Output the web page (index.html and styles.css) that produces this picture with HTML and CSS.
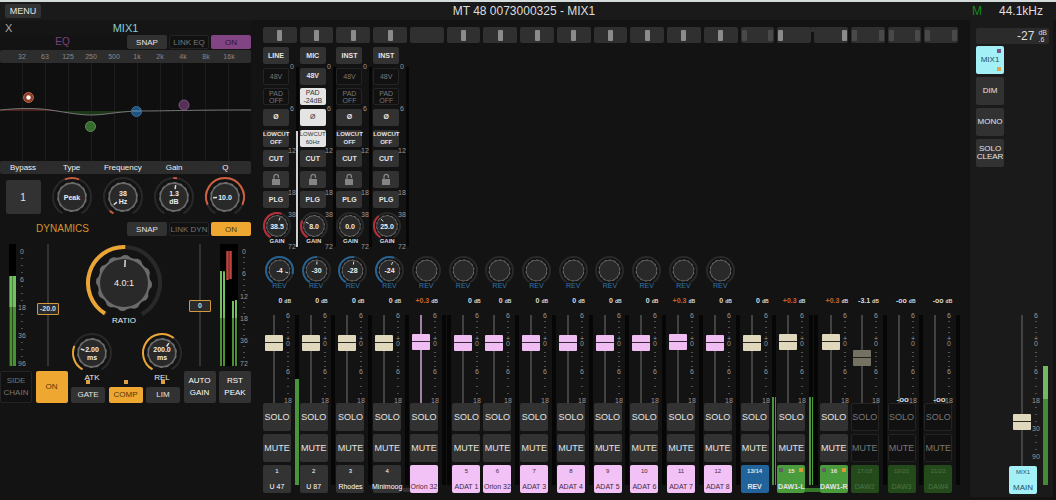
FILE: index.html
```html
<!DOCTYPE html>
<html lang="en">
<head>
  <meta charset="UTF-8">
  <title>MT 48 - MIX1</title>
  <link rel="stylesheet" href="styles.css">
</head>
<body>
  <header class="topbar">
    <button class="menu">MENU</button>
    <h1>MT 48 0073000325 - MIX1</h1>
    <div class="clock"><span class="master">M</span><span>44.1kHz</span></div>
  </header>

  <main class="mixer">
    <section class="side">
      <div class="side-title">
        <button class="close">X</button>
        <h2>MIX1</h2>
      </div>

      <div class="module-head eq-head">
        <h3>EQ</h3>
        <button>SNAP</button>
        <button class="off">LINK EQ</button>
        <button class="on">ON</button>
      </div>
      <div class="freqs">
        <span>32</span><span>63</span><span>125</span><span>250</span><span>500</span><span>1k</span><span>2k</span><span>4k</span><span>8k</span><span>16k</span>
      </div>
      <svg class="graph" viewBox="0 0 251 98">
        <path class="grid" d="M22.5 0V98M45.5 0V98M68.5 0V98M91.5 0V98M114.5 0V98M137.5 0V98M160.5 0V98M182.5 0V98M205.5 0V98M228.5 0V98"/>
        <path d="M0 47C15 45 40 44 60 48L0 48Z" fill="#4a211b"/>
        <path d="M60 48C78 53 100 53 114 50Q125 48 137 48Z" fill="#1d3618"/>
        <path d="M0 47C20 45 36 45 50 47C70 50 80 52 91 52C105 52 114 49 137 48C170 48 185 47 251 47" fill="none" stroke="#777" stroke-width="1"/>
        <circle cx="28.500" cy="34.500" r="5" fill="#8d3b26" stroke="#b5694f"/>
        <circle cx="28.500" cy="34.500" r="2.200" fill="#fff"/>
        <circle cx="90.500" cy="63.500" r="5" fill="#376a2e" stroke="#5e9154"/>
        <circle cx="136.500" cy="48.500" r="5" fill="#1e527f" stroke="#3c6f9c"/>
        <path d="M132 48H141" stroke="#6f94b3"/>
        <circle cx="184" cy="42" r="5" fill="#573058" stroke="#79527a"/>
      </svg>
      <div class="params head">
        <span>Bypass</span><span>Type</span><span>Frequency</span><span>Gain</span><span>Q</span>
      </div>
      <div class="params">
        <button class="band">1</button>
        <label class="knob" data-name="Type" data-size="42" data-color="#c8593a" data-from="-22" data-to="22" data-text="Peak"></label>
        <label class="knob" data-name="Frequency" data-size="42" data-color="#c8593a" data-from="-150" data-to="-136" data-pointer="-130" data-text="38|Hz"></label>
        <label class="knob" data-name="Gain" data-size="42" data-color="#c8593a" data-from="-2" data-to="9" data-pointer="8" data-text="1.3|dB"></label>
        <label class="knob" data-name="Q" data-size="42" data-color="#d0603f" data-from="-114" data-to="114" data-pointer="-94" data-text="10.0"></label>
      </div>

      <div class="module-head dyn-head">
        <h3>DYNAMICS</h3>
        <button>SNAP</button>
        <button class="off">LINK DYN</button>
        <button class="on">ON</button>
      </div>
      <div class="dynamics">
        <svg class="dyn-meter" width="37" height="124">
          <rect x="9" width="7" height="122" fill="#000"/>
          <path d="M11 32V122M14.500 32V122" stroke="#4a9136" stroke-width="3"/>
          <path d="M11 32V63M14.500 32V63" stroke="#73c060" stroke-width="3"/>
          <g class="scale" data-x="22" data-marks="0:7 6:35 18:63 36:91 96:119"></g>
        </svg>
        <label class="threshold" style="--p:.54">
          <input type="range" value="46" aria-label="Threshold"><output>-20.0</output>
        </label>
        <div class="dyn-knobs">
          <label class="knob" data-name="Ratio" data-size="78" data-color="#eba535" data-from="-148" data-to="2" data-pointer="3" data-text="4.0:1"></label>
          <span class="caption">RATIO</span>
          <div class="times">
            <div>
              <label class="knob" data-name="Attack" data-size="42" data-color="#eba535" data-from="-150" data-to="-68" data-pointer="-70" data-text="2.00|ms"></label>
              <span class="caption">ATK</span>
            </div>
            <div>
              <label class="knob" data-name="Release" data-size="42" data-color="#eba535" data-from="-150" data-to="38" data-pointer="35" data-text="200.0|ms"></label>
              <span class="caption">REL</span>
            </div>
          </div>
        </div>
        <label class="threshold" style="--p:.51">
          <input type="range" value="49" aria-label="Gain"><output>0</output>
        </label>
        <svg class="dyn-meter" width="40" height="124">
          <rect x="9" width="18" height="122" fill="#000"/>
          <path d="M10 27V122M13 27V122M22 57V122M25 56V122" stroke="#4a9136" stroke-width="2"/>
          <path d="M10 27V74M13 28V74M22 57V74M25 56V74" stroke="#73c060" stroke-width="2"/>
          <path d="M16.500 7V36M19.500 7V35" stroke="#c54440" stroke-width="2.500"/>
          <g class="scale" data-x="33" data-marks="0:7 6:29 12:52 18:74 36:96 72:119"></g>
        </svg>
      </div>
      <div class="dyn-buttons">
        <button class="off">SIDE<br>CHAIN</button>
        <button class="on">ON</button>
        <div class="stage"><i></i><button>GATE</button></div>
        <div class="stage"><i></i><button class="on">COMP</button></div>
        <div class="stage"><i></i><button>LIM</button></div>
        <button class="strong">AUTO<br>GAIN</button>
        <button class="strong">RST<br>PEAK</button>
      </div>
    </section>

    <section class="channels" id="channels"></section>

    <aside class="monitor">
      <div class="level"><span>-27</span><small>dB<br>.6</small></div>
      <div class="monitor-buttons">
        <button class="mix">MIX1</button>
        <button>DIM</button>
        <button>MONO</button>
        <button>SOLO<br>CLEAR</button>
      </div>
      <div class="main-out">
        <div class="main-strip">
          <div class="fader-row">
            <input class="fader" type="range" value="27" aria-label="Main level">
            <svg class="marks" width="8" height="151"><g class="scale" data-x="4" data-marks="6:0 +:23 0:28 -:36 6:56 18:85 30:113 90:141"></g></svg>
          </div>
          <button class="name cyan"><small>MIX1</small><span>MAIN</span></button>
        </div>
        <div class="main-meter"></div>
      </div>
    </aside>
  </main>

  <script src="script.js"></script>
</body>
</html>
```

FILE: styles.css
```css
* {
  box-sizing: border-box;
}
body {
  margin: 0;
  min-height: 100vh;
  display: flex;
  flex-direction: column;
  background: #131313;
  color: #ddd;
  font-family: "Liberation Sans", Arial, sans-serif;
  font-size: 10px;
}
h1, h2, h3 {
  margin: 0;
  font-weight: normal;
}
button {
  padding: 0;
  border: 0;
  border-radius: 2px;
  background: #323232;
  color: #e4e4e4;
  font: inherit;
  cursor: pointer;
}
button.off {
  background: #111;
  border: 1px solid #242424;
  color: #777;
}

/* top bar */
.topbar {
  display: grid;
  grid-template-columns: 1fr auto 1fr;
  align-items: center;
  height: 20px;
  padding: 0 13px 0 5px;
  border-top: 2px solid #d3dcda;
  background: #1a1a1a;
}
.menu {
  justify-self: start;
  width: 36px;
  height: 14px;
  font-size: 9px;
}
.topbar h1 {
  font-size: 12px;
}
.clock {
  display: flex;
  justify-content: flex-end;
  gap: 17px;
  font-size: 12px;
}
.master {
  color: #148a1c;
}

.mixer {
  flex: 1;
  display: grid;
  grid-template-columns: 251px 1fr 83px;
  padding-right: 3px;
}

/* left panel */
.side-title {
  display: grid;
  grid-template-columns: 1fr auto 1fr;
  align-items: center;
  height: 15px;
  padding: 0 5px;
  background: #151515;
}
.side-title h2 {
  color: #88cbd6;
  font-size: 11px;
}
.close {
  justify-self: start;
  background: none;
  color: #aaa;
  font-size: 11px;
}
.module-head {
  display: grid;
  grid-template-columns: 1fr 40px 40px 40px;
  gap: 2px;
  height: 13px;
}
.module-head h3 {
  text-align: center;
  font-size: 10px;
  line-height: 14px;
}
.module-head button {
  font-size: 8px;
}
.eq-head h3 {
  color: #7b427b;
}
.eq-head .on {
  background: #834484;
  color: #32132f;
}
.dyn-head {
  margin-top: 4px;
}
.dyn-head h3 {
  color: #d39432;
}
.on {
  background: #eea832;
  color: #523707;
}
.freqs {
  display: flex;
  justify-content: center;
  height: 13px;
  margin-top: 2px;
  border-radius: 2px;
  background: #2d2d2d;
  color: #888;
  font-size: 7px;
  line-height: 13px;
}
.freqs span {
  width: 23px;
  text-align: center;
}
.graph {
  display: block;
  width: 100%;
  background: #0f0f0f;
}
.grid {
  stroke: #1d1d1d;
}
.params {
  display: grid;
  grid-template-columns: 46px repeat(4, 1fr);
  align-items: center;
  justify-items: center;
  height: 44px;
  padding-top: 2px;
}
.params.head {
  height: 13px;
  padding: 0;
  border-radius: 2px;
  background: #2c2c2c;
  color: #f0f0f0;
  font-size: 8px;
}
.band {
  width: 35px;
  height: 34px;
}

.knob {
  position: relative;
  display: block;
}
.knob svg {
  display: block;
  overflow: visible;
}
.knob input {
  position: absolute;
  inset: 0;
  width: 100%;
  height: 100%;
  margin: 0;
  opacity: 0;
}
.knob text {
  fill: #eee;
  font-size: 7px;
  font-weight: bold;
  text-anchor: middle;
}
.knob.large text {
  font-size: 9px;
  font-weight: normal;
}
.scale text {
  fill: #999;
  font-size: 7px;
  text-anchor: middle;
}
.scale path {
  stroke: #505050;
}

.dynamics {
  display: grid;
  grid-template-columns: 37px 22px 1fr 22px 40px;
  height: 136px;
  padding-top: 9px;
}
.dyn-meter {
  overflow: visible;
}
.threshold {
  position: relative;
  height: 122px;
}
.threshold input {
  width: 22px;
  height: 100%;
  margin: 0;
  writing-mode: vertical-lr;
  direction: rtl;
  appearance: none;
  background: linear-gradient(#333, #333) center / 2px 100% no-repeat;
}
.threshold input::-webkit-slider-thumb {
  appearance: none;
  width: 22px;
  height: 12px;
  border: 1px solid #d29a3b;
  border-radius: 1px;
  background: #2b2b2b;
}
.threshold output {
  position: absolute;
  top: calc((100% - 12px) * var(--p));
  left: 0;
  width: 100%;
  line-height: 12px;
  font-size: 7px;
  font-weight: bold;
  text-align: center;
  pointer-events: none;
}
.dyn-knobs {
  display: flex;
  flex-direction: column;
  align-items: center;
}
.caption {
  color: #eee;
  font-size: 8px;
  line-height: 8px;
}
.dyn-knobs > .caption {
  margin-top: -5px;
}
.times {
  display: flex;
  gap: 28px;
  padding: 7px 0 0 6px;
}
.times div {
  display: flex;
  flex-direction: column;
  align-items: center;
}
.dyn-buttons {
  display: grid;
  grid-template-columns: 32px 32px 34px 34px 34px 32px 32px;
  justify-content: space-between;
  height: 32px;
  font-size: 8px;
  line-height: 12px;
}
.dyn-buttons .strong {
  color: #fff;
}
.stage {
  display: flex;
  flex-direction: column;
  align-items: center;
  justify-content: flex-end;
  gap: 3px;
}
.stage i {
  width: 4px;
  height: 4px;
  background: #dda044;
}
.stage button {
  width: 100%;
  height: 16px;
}

/* channel strips */
.channels {
  display: grid;
  grid-template-columns: repeat(19, minmax(0, 1fr));
  padding: 7px 9px 0 12px;
}
.strip {
  display: grid;
  grid-template-rows: 16px 208px 42px 12px auto;
  align-content: start;
}
.pan {
  position: relative;
  display: flex;
  align-items: center;
  justify-content: center;
  margin-right: 3px;
  padding: 0 1px;
  border-radius: 2px;
  background: #303030;
}
.pan i {
  width: 5px;
  height: 11px;
  border-radius: 1px;
  background: #8b8b8b;
}
.pan.stereo {
  justify-content: space-between;
}
.pan.stereo i {
  background: #494949;
}
.pan.left {
  justify-content: flex-start;
}
.pan.left::after {
  content: "";
  position: absolute;
  left: 100%;
  top: 0;
  width: 4px;
  height: 5px;
  background: #303030;
}
.pan.right {
  justify-content: flex-end;
}
.preamp {
  display: grid;
  grid-template-columns: 26px 7px 3px;
  align-items: start;
  padding-top: 4px;
}
.preamp-buttons {
  display: flex;
  flex-direction: column;
  justify-content: space-between;
  height: 197px;
}
.preamp-buttons button {
  flex: none;
  width: 26px;
  height: 17px;
  font-size: 7px;
  font-weight: bold;
  line-height: 8px;
  white-space: nowrap;
}
.preamp-buttons .tiny {
  font-size: 6px;
}
.preamp-buttons .off {
  line-height: 7px;
  font-weight: normal;
}
.preamp-buttons .lit {
  background: #e4e4e4;
  color: #333;
  font-weight: normal;
}
.preamp-buttons button svg {
  display: block;
  margin: auto;
}
.gain {
  display: flex;
  flex-direction: column;
  align-items: center;
  width: 28px;
  font-size: 6px;
  font-weight: bold;
  line-height: 6px;
}
.gain span, .send span {
  margin-top: -2px;
}
.preamp .marks, .fader-row .marks {
  display: block;
  overflow: visible;
}
.preamp-meter {
  height: 180px;
  margin-top: 20px;
  background: #060606;
}
.preamp-meter i {
  display: block;
  width: 2px;
  height: 116px;
  margin-top: 64px;
  background: #d0d0d0;
}
.send {
  display: flex;
  flex-direction: column;
  align-items: center;
  margin: 5px 4px 0 0;
  color: #3278ad;
  font-size: 7px;
  line-height: 6px;
}
.db {
  display: flex;
  justify-content: flex-end;
  align-items: center;
  gap: 2px;
  width: 28px;
  margin-top: 3px;
  font-size: 7px;
  font-weight: bold;
}
.db small {
  font-size: 5px;
}
.db.hot b {
  color: #c4652c;
}
.lane {
  position: relative;
  display: flex;
  justify-content: space-between;
  padding: 10px 1px 0 0;
}
.linked .lane {
  flex-direction: row-reverse;
  padding-right: 3px;
}
.linked .db {
  margin-left: 6px;
}
.controls, .main-strip {
  display: flex;
  flex-direction: column;
  width: 28px;
}
.controls > button {
  height: 28px;
  margin-bottom: 3px;
  font-size: 9px;
}
.fader-row {
  display: flex;
  gap: 1px;
  padding-left: 2px;
}
.fader {
  width: 18px;
  height: 88px;
  margin: 0;
  writing-mode: vertical-lr;
  direction: rtl;
  appearance: none;
  background: linear-gradient(#424242, #424242) center / 2px 100% no-repeat;
}
.fader::-webkit-slider-thumb {
  appearance: none;
  width: 18px;
  height: 16px;
  border-radius: 1px;
  background: linear-gradient(#e0d8bd 7px, #292721 7px, #292721 8px, #e0d8bd 8px);
}
.pink .fader::-webkit-slider-thumb {
  background: linear-gradient(#efbdf2 7px, #362838 7px, #362838 8px, #efbdf2 8px);
}
.selected .fader {
  background: linear-gradient(#a581a8, #a581a8) center / 2px 100% no-repeat;
}
.dimmed .fader::-webkit-slider-thumb {
  background: linear-gradient(#757163 7px, #22211d 7px, #22211d 8px, #757163 8px);
}
.silent .fader::-webkit-slider-thumb {
  background: none;
}
.infinity {
  position: absolute;
  top: 90px;
  left: 9px;
  font-size: 8px;
  font-weight: bold;
  line-height: 9px;
}
.meter {
  display: flex;
  gap: 1px;
  align-items: flex-end;
  width: 4px;
  height: 170px;
  background: #060606;
}
.meter i {
  flex: 1;
  background: #49963a;
}
.controls .name, .name {
  display: flex;
  flex-direction: column;
  align-items: center;
  justify-content: space-between;
  width: 28px;
  height: 28px;
  margin: 0;
  padding: 2px 0;
  background: #333;
  font-size: 7px;
  line-height: 9px;
  white-space: nowrap;
}
.name small {
  font-size: 6px;
}
.plain .name {
  color: #fff;
}
.blue .name, .green .name {
  font-weight: bold;
}
.pink .name {
  background: #f2c1f5;
  color: #432a45;
}
.blue .name {
  background: #21639a;
}
.green .name {
  background: #4a9b3b;
}
.dimmed .name {
  background: #244a1c;
  color: #4c7544;
}
.leds .name {
  background: linear-gradient(#625f62, #625f62) 2px 3px / 4px 4px no-repeat,
    linear-gradient(#d79c36, #d79c36) 22px 3px / 4px 4px no-repeat, #4a9b3b;
}
.bridge::after {
  content: "";
  position: absolute;
  left: 28px;
  bottom: 1px;
  width: 16px;
  height: 4px;
  background: #36792a;
}
.bridge.gray::after {
  left: 30px;
  background: #303030;
}

/* monitor */
.monitor {
  display: flex;
  flex-direction: column;
  margin-bottom: 3px;
  padding: 8px 4px 0 6px;
  background: #1a1a1a;
}
.level {
  display: flex;
  align-items: center;
  justify-content: flex-end;
  gap: 4px;
  height: 16px;
  padding-right: 2px;
  border-radius: 2px;
  background: #2b2b2b;
  font-size: 12px;
}
.level small {
  font-size: 7px;
  line-height: 7px;
}
.monitor-buttons {
  display: flex;
  flex-direction: column;
  gap: 3px;
  margin-top: 2px;
}
.monitor-buttons button {
  width: 28px;
  height: 28px;
  font-size: 8px;
  line-height: 8px;
}
.monitor-buttons .mix {
  background: linear-gradient(#705789, #705789) 21px 3px / 4px 4px no-repeat,
    linear-gradient(#d7a951, #d7a951) 21px 21px / 4px 4px no-repeat, #a3f1f7;
  color: #245058;
}
.main-out {
  display: flex;
  justify-content: flex-end;
  gap: 6px;
  margin-top: 148px;
  padding-right: 1px;
}
.main-strip .fader-row {
  padding-left: 4px;
}
.main-strip .fader {
  height: 151px;
}
.main-strip .cyan {
  background: #a3f1f7;
  color: #245058;
}
.main-strip .cyan span {
  font-size: 8px;
}
.main-meter {
  width: 5px;
  height: 119px;
  margin-top: 51px;
  background: linear-gradient(#73b95f 33px, #478a34 33px);
}
```

FILE: script.js
```js
const channels = [
  { num: '1', name: 'U 47', db: '0', kind: 'plain', input: 'LINE', gain: '38.5', gainTo: 20, send: '-4', sendTo: 105, meter: [106], low: 'OFF' },
  { num: '2', name: 'U 87', db: '0', kind: 'plain', input: 'MIC', gain: '8.0', gainTo: -65, send: '-30', sendTo: 3, low: '60Hz', lit: true },
  { num: '3', name: 'Rhodes', db: '0', kind: 'plain', input: 'INST', gain: '0.0', send: '-28', sendTo: 8, low: 'OFF' },
  { num: '4', name: 'Minimoog', db: '0', kind: 'plain', input: 'INST', gain: '25.0', gainTo: -40, send: '-24', sendTo: 20, low: 'OFF', bridge: 'gray' },
  { num: '', name: 'Orion 32', db: '+0.3', kind: 'pink selected', pan: 'none' },
  { num: '5', name: 'ADAT 1', db: '0', kind: 'pink linked' },
  { num: '6', name: 'Orion 32', db: '0', kind: 'pink' },
  { num: '7', name: 'ADAT 3', db: '0', kind: 'pink' },
  { num: '8', name: 'ADAT 4', db: '0', kind: 'pink' },
  { num: '9', name: 'ADAT 5', db: '0', kind: 'pink' },
  { num: '10', name: 'ADAT 6', db: '0', kind: 'pink' },
  { num: '11', name: 'ADAT 7', db: '+0.3', kind: 'pink' },
  { num: '12', name: 'ADAT 8', db: '0', kind: 'pink' },
  { num: '13/14', name: 'REV', db: '0', kind: 'blue', pan: 'stereo', meter: [88, 88], noSend: true },
  { num: '15', name: 'DAW1-L', db: '+0.3', kind: 'green leds', pan: 'left', meter: [88, 88], noSend: true, bridge: 'green' },
  { num: '16', name: 'DAW1-R', db: '+0.3', kind: 'green leds linked', pan: 'right', noSend: true },
  { num: '17/18', name: 'DAW2', db: '-3.1', kind: 'dimmed', pan: 'stereo', noSend: true },
  { num: '19/20', name: 'DAW3', db: '-oo', kind: 'dimmed silent', pan: 'stereo', noSend: true },
  { num: '21/22', name: 'DAW4', db: '-oo', kind: 'dimmed silent', pan: 'stereo', noSend: true }
];

const faderValues = { '0': 72, '+0.3': 74, '-3.1': 51, '-oo': 0 };

// 0 degrees points up, positive angles go clockwise
function point(c, r, deg) {
  const a = (deg - 90) * Math.PI / 180;
  return (c + r * Math.cos(a)).toFixed(2) + ' ' + (c + r * Math.sin(a)).toFixed(2);
}

function arc(c, r, from, to) {
  return `M${point(c, r, from)}A${r} ${r} 0 ${to - from > 180 ? 1 : 0} 1 ${point(c, r, to)}`;
}

function bumps(c, r, depth, count) {
  let d = '';
  for (let i = 0; i < count * 4; i++) {
    d += (i ? 'L' : 'M') + point(c, i % 4 < 2 ? r : r - depth, i * 90 / count);
  }
  return d + 'Z';
}

function knobSvg(k) {
  const size = +k.size;
  const c = size / 2;
  const large = size > 60;
  const small = size < 40;
  const width = large ? 4 : 2;
  const ring = c - width / 2 - (small ? 0 : 1);
  const inner = large ? 28 : small ? 11 : 15;
  const edge = large ? 4 : small ? 1 : 2;
  const lines = k.text ? k.text.split('|') : [];
  const first = c + (large ? 3 : 2.5) - (lines.length - 1) * 4;
  return `<svg width="${size}" height="${size}">
    <path d="${arc(c, ring, -150, 150)}" fill="none" stroke="#292929" stroke-width="${width}"/>
    ${k.color && k.to !== undefined ? `<path d="${arc(c, ring, +k.from, +k.to)}" fill="none" stroke="${k.color}" stroke-width="${width}"/>` : ''}
    <path d="${bumps(c, inner, large ? 1.8 : 0.5, large ? 12 : 14)}" fill="#6b6b6b"/>
    <circle cx="${c}" cy="${c}" r="${inner - edge}" fill="#292929"/>
    ${k.pointer !== undefined ? `<path d="M${point(c, inner - edge - 1, +k.pointer)}L${point(c, inner - (large ? 12 : small ? 5 : 7), +k.pointer)}" stroke="#ddd" stroke-width="${small ? 1 : 1.5}"/>` : ''}
    ${lines.map((t, i) => `<text x="${c}" y="${first + i * 8}">${t}</text>`).join('')}
  </svg>`;
}

function knob(k) {
  return `<label class="knob"><input type="range" aria-label="${k.name}">${knobSvg(k)}</label>`;
}

function scaleMarks(x, marks) {
  const list = marks.split(' ').map(m => m.split(':'));
  let html = '';
  list.forEach(([text, y], i) => {
    html += `<text x="${x}" y="${+y + 3}">${text}</text>`;
    const next = list[i + 1];
    if (!next || next[1] - y < 15) return;
    for (let t = 1; t < 4; t++) {
      const ty = Math.round(+y + (next[1] - y) * t / 4) + 0.5;
      html += `<path d="M${x - 1} ${ty}h2"/>`;
    }
  });
  return html;
}

const lock = `<svg width="10" height="12" viewBox="0 0 10 12"><path d="M3 6V3.500a2.200 2.200 0 0 1 4.400 0V5" fill="none" stroke="#858585" stroke-width="1.300"/><rect x="1" y="6" width="8" height="6" fill="#858585"/></svg>`;

function preamp(ch, index) {
  if (!ch.input) return '<div></div>';
  return `<div class="preamp">
    <div class="preamp-buttons">
      <button>${ch.input}</button>
      <button class="${ch.lit ? '' : 'off'}">48V</button>
      <button class="${ch.lit ? 'lit' : 'off'}">PAD<br>${ch.lit ? '-24dB' : 'OFF'}</button>
      <button class="${ch.lit ? 'lit' : ''}">Ø</button>
      <button class="tiny ${ch.lit ? 'lit' : ''}">LOWCUT<br>${ch.low}</button>
      <button>CUT</button>
      <button aria-label="Lock">${lock}</button>
      <button>PLG</button>
      <div class="gain">
        ${knob({ name: 'Gain', size: 28, color: '#b32f3c', from: -150, to: ch.gainTo, pointer: ch.gainTo, text: ch.gain })}
        <span>GAIN</span>
      </div>
    </div>
    <svg class="marks" width="7" height="200"><g class="scale">${scaleMarks(3, '0:19 6:61 12:103 18:145 38:167 72:199').replace(/<path.*?\/>/g, '')}</g></svg>
    <div class="preamp-meter">${index === 0 ? '<i></i>' : ''}</div>
  </div>`;
}

function pan(type) {
  const thumbs = type === 'none' ? '' : type === 'stereo' ? '<i></i><i></i>' : '<i></i>';
  return `<div class="pan ${type || ''}">${thumbs}</div>`;
}

function strip(ch, index) {
  const off = ch.kind.includes('dimmed') ? 'off' : '';
  const send = ch.noSend ? '<div></div>' : `<div class="send">
      ${knob({ name: 'Reverb send', size: 29, color: '#276391', from: -150, to: ch.sendTo, pointer: ch.sendTo, text: ch.send })}
      <span>REV</span>
    </div>`;
  return `<article class="strip ${ch.kind}">
    ${pan(ch.pan)}
    ${preamp(ch, index)}
    ${send}
    <div class="db ${ch.db === '+0.3' ? 'hot' : ''}"><b>${ch.db}</b><small>dB</small></div>
    <div class="lane ${ch.bridge ? 'bridge ' + ch.bridge : ''}">
      <div class="controls">
        <div class="fader-row">
          <input class="fader" type="range" value="${faderValues[ch.db]}" aria-label="${ch.name} level">
          <svg class="marks" width="8" height="88"><g class="scale">${scaleMarks(4, '6:0 +:23 0:28 -:36 6:56 18:85')}</g></svg>
        </div>
        <button class="${off}">SOLO</button>
        <button class="${off}">MUTE</button>
        <button class="name"><small>${ch.num}</small><span>${ch.name}</span></button>
      </div>
      <div class="meter">${(ch.meter || []).map(h => `<i style="height:${h}px"></i>`).join('')}</div>
      ${ch.db === '-oo' ? '<span class="infinity">-oo</span>' : ''}
    </div>
  </article>`;
}

document.getElementById('channels').innerHTML = channels.map(strip).join('');

document.querySelectorAll('.knob[data-size]').forEach(el => {
  if (el.dataset.size > 60) el.classList.add('large');
  el.innerHTML = `<input type="range" aria-label="${el.dataset.name}">${knobSvg(el.dataset)}`;
});

document.querySelectorAll('.scale[data-marks]').forEach(el => {
  el.innerHTML = scaleMarks(+el.dataset.x, el.dataset.marks);
});
```
